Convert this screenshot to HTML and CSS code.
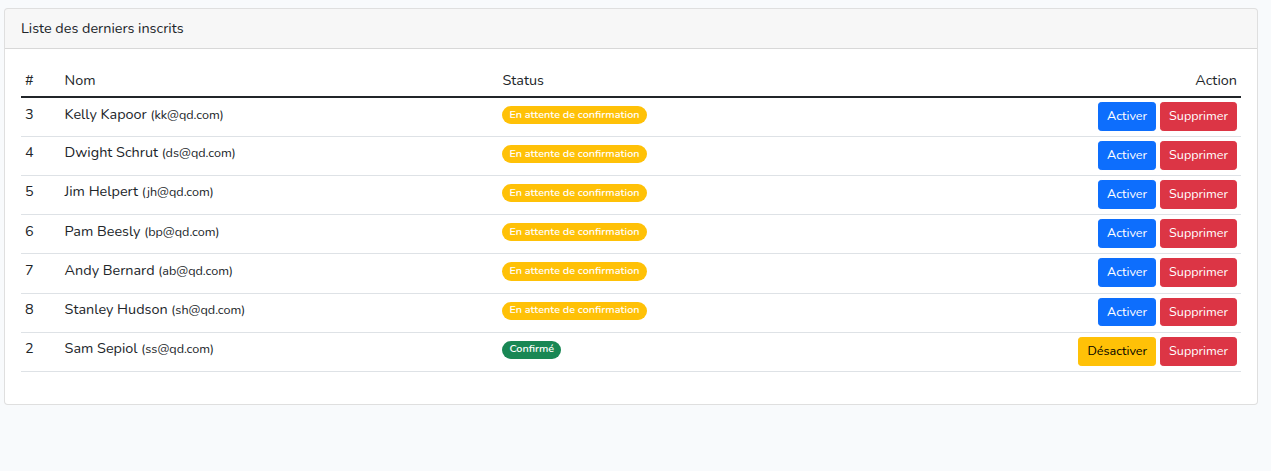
FILE: index.html
```html
<!DOCTYPE html>
<html lang="fr">
<head>
<meta charset="utf-8">
<title>Liste des derniers inscrits</title>
<link rel="stylesheet" href="styles.css">
</head>
<body>
<div class="page">
  <div class="card">
    <div class="card-header">Liste des derniers inscrits</div>
    <div class="card-body">
      <table class="table">
        <thead>
          <tr>
            <th class="col-id">#</th>
            <th class="col-name">Nom</th>
            <th class="col-status">Status</th>
            <th class="col-action">Action</th>
          </tr>
        </thead>
        <tbody>
          <tr>
            <td>3</td>
            <td>Kelly Kapoor <small>(kk@qd.com)</small></td>
            <td><span class="badge badge-warning">En attente de confirmation</span></td>
            <td><div class="actions"><button class="btn btn-primary">Activer</button><button class="btn btn-danger">Supprimer</button></div></td>
          </tr>
          <tr>
            <td>4</td>
            <td>Dwight Schrut <small>(ds@qd.com)</small></td>
            <td><span class="badge badge-warning">En attente de confirmation</span></td>
            <td><div class="actions"><button class="btn btn-primary">Activer</button><button class="btn btn-danger">Supprimer</button></div></td>
          </tr>
          <tr>
            <td>5</td>
            <td>Jim Helpert <small>(jh@qd.com)</small></td>
            <td><span class="badge badge-warning">En attente de confirmation</span></td>
            <td><div class="actions"><button class="btn btn-primary">Activer</button><button class="btn btn-danger">Supprimer</button></div></td>
          </tr>
          <tr>
            <td>6</td>
            <td>Pam Beesly <small>(bp@qd.com)</small></td>
            <td><span class="badge badge-warning">En attente de confirmation</span></td>
            <td><div class="actions"><button class="btn btn-primary">Activer</button><button class="btn btn-danger">Supprimer</button></div></td>
          </tr>
          <tr>
            <td>7</td>
            <td>Andy Bernard <small>(ab@qd.com)</small></td>
            <td><span class="badge badge-warning">En attente de confirmation</span></td>
            <td><div class="actions"><button class="btn btn-primary">Activer</button><button class="btn btn-danger">Supprimer</button></div></td>
          </tr>
          <tr>
            <td>8</td>
            <td>Stanley Hudson <small>(sh@qd.com)</small></td>
            <td><span class="badge badge-warning">En attente de confirmation</span></td>
            <td><div class="actions"><button class="btn btn-primary">Activer</button><button class="btn btn-danger">Supprimer</button></div></td>
          </tr>
          <tr>
            <td>2</td>
            <td>Sam Sepiol <small>(ss@qd.com)</small></td>
            <td><span class="badge badge-success">Confirmé</span></td>
            <td><div class="actions"><button class="btn btn-warning">Désactiver</button><button class="btn btn-danger">Supprimer</button></div></td>
          </tr>
        </tbody>
      </table>
    </div>
  </div>
</div>
</body>
</html>
```
FILE: styles.css
```css
* { box-sizing: border-box; }
html, body {
  margin: 0;
  padding: 0;
  background: #f8fafc;
  height: 100%;
}
body {
  font-family: "Nunito", "Lato", "Noto Sans", sans-serif;
  font-size: 14.4px;
  line-height: 1.6;
  color: #212529;
}
.page {
  padding: 8px 13px 0 4px;
}
.card {
  background: #fff;
  border: 1px solid rgba(0,0,0,0.125);
  border-radius: 4px;
}
.card-header {
  background: rgba(0,0,0,0.03);
  border-bottom: 1px solid rgba(0,0,0,0.125);
  padding: 8px 16px;
  line-height: 23.04px;
  border-radius: 3px 3px 0 0;
}
.card-body {
  padding: 16px;
}
.table {
  width: 100%;
  border-collapse: collapse;
  margin-bottom: 16px;
}
.table th, .table td {
  padding: 4px;
  line-height: 23.04px;
  text-align: left;
  vertical-align: top;
  border-bottom: 1px solid #dee2e6;
}
.table th {
  font-weight: normal;
  vertical-align: bottom;
  border-bottom: 2px solid #212529;
}
.table tbody td {
  height: 39.2px;
}
.table tbody td:not(:last-child) {
  padding-top: 4.5px;
  padding-bottom: 3.5px;
}
.col-id { width: 39.6px; }
.col-name { width: 437.8px; }
.table th.col-action { text-align: right; }
small { font-size: 12.6px; }
.badge {
  display: inline-block;
  font-size: 10.8px;
  font-weight: 600;
  line-height: 1;
  color: #fff;
  padding: 3.78px 7px;
  border-radius: 50rem;
  margin-top: 3.5px;
  vertical-align: top;
}
.badge-warning { background: #ffc107; }
.badge-success { background: #198754; }
.actions {
  display: flex;
  justify-content: flex-end;
  align-items: flex-start;
  gap: 4px;
}
.btn {
  font-family: inherit;
  font-size: 12.6px;
  line-height: 18.9px;
  padding: 4px 8px;
  border: 1px solid transparent;
  border-radius: 3.2px;
  color: #fff;
  cursor: pointer;
}
.btn-primary { background: #0d6efd; border-color: #0d6efd; }
.btn-danger { background: #dc3545; border-color: #dc3545; }
.btn-warning { background: #ffc107; border-color: #ffc107; color: #000; }
```
